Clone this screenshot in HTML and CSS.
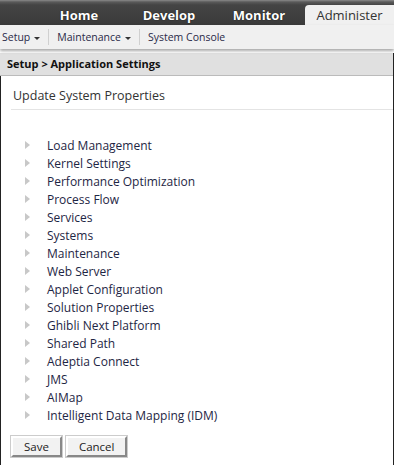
FILE: index.html
```html
<!DOCTYPE html>
<html lang="en">
  <head>
    <title>Application Settings</title>
    <link rel="stylesheet" href="styles.css">
  </head>
  <body>

  <div class="topbar">
    <a class="tab">Home</a>
    <a class="tab">Develop</a>
    <a class="tab">Monitor</a>
    <a class="tab active">Administer</a>
  </div>

  <div class="subnav">
    <span class="sub-item">Setup <span class="caret"></span></span>
    <span class="sep"></span>
    <span class="sub-item">Maintenance <span class="caret"></span></span>
    <span class="sep"></span>
    <span class="sub-item">System Console</span>
  </div>

  <div class="page">
    <div class="crumb">Setup &gt; Application Settings</div>
    <div class="panel">
      <div class="panel-title">Update System Properties</div>

      <ul class="tree">
        <li><span class="arrow"></span>Load Management</li>
        <li><span class="arrow"></span>Kernel Settings</li>
        <li><span class="arrow"></span>Performance Optimization</li>
        <li><span class="arrow"></span>Process Flow</li>
        <li><span class="arrow"></span>Services</li>
        <li><span class="arrow"></span>Systems</li>
        <li><span class="arrow"></span>Maintenance</li>
        <li><span class="arrow"></span>Web Server</li>
        <li><span class="arrow"></span>Applet Configuration</li>
        <li><span class="arrow"></span>Solution Properties</li>
        <li><span class="arrow"></span>Ghibli Next Platform</li>
        <li><span class="arrow"></span>Shared Path</li>
        <li><span class="arrow"></span>Adeptia Connect</li>
        <li><span class="arrow"></span>JMS</li>
        <li><span class="arrow"></span>AIMap</li>
        <li><span class="arrow"></span>Intelligent Data Mapping (IDM)</li>
      </ul>

      <div class="buttons">
        <button class="btn">Save</button>
        <button class="btn">Cancel</button>
      </div>
    </div>
  </div>

  </body>
</html>
```

FILE: styles.css
```css
body {
  margin: 0;
  width: 394px;
  height: 465px;
  overflow: hidden;
  font-family: "Open Sans", "DejaVu Sans", sans-serif;
  background-color: #fff;
}

.topbar {
  display: flex;
  justify-content: flex-end;
  align-items: flex-end;
  gap: 2px;
  height: 25px;
  background: linear-gradient(#8a8a8a 0, #5a5a5a 2px, #444 5px, #3a3a3a 25px);
}

.tab {
  width: 88px;
  height: 20px;
  line-height: 20px;
  text-align: center;
  font-size: 13px;
  font-weight: bold;
  color: #fff;
  text-shadow: 0 0 1px #000;
}

.tab.active {
  width: 89px;
  font-weight: normal;
  color: #333;
  text-shadow: none;
  background-color: #f0f0f0;
  border-top-left-radius: 4px;
}

.subnav {
  display: flex;
  align-items: center;
  height: 24px;
  padding-left: 2px;
  background-color: #f0f0f0;
  font-size: 10.5px;
  color: #2a2a48;
  box-shadow: 0 2px 3px rgba(0, 0, 0, 0.35);
  position: relative;
}

.sub-item {
  display: flex;
  align-items: center;
  gap: 4px;
}

.caret {
  width: 0;
  height: 0;
  border-left: 3px solid transparent;
  border-right: 3px solid transparent;
  border-top: 3px solid #333;
  margin-top: 2px;
}

.sep {
  width: 1px;
  height: 16px;
  background-color: #d0d0d0;
  margin: 0 8px 0 8px;
}

.page {
  margin-top: 4px;
  border-right: 1px solid #222;
}

.crumb {
  height: 22px;
  line-height: 22px;
  padding-left: 7px;
  background-color: #e0e0e0;
  border-bottom: 1px solid #bbb;
  font-size: 11px;
  font-weight: bold;
  color: #111;
}

.panel {
  height: 409px;
  border-left: 1px solid #222;
  border-bottom: 1px solid #222;
  padding-left: 10px;
}

.panel-title {
  padding: 11px 0 5px 2px;
  font-size: 12.5px;
  color: #333;
  border-bottom: 1px solid #e4e4e4;
}

.tree {
  list-style: none;
  margin: 26px 0 0 0;
  padding: 0 0 0 14px;
}

.tree li {
  display: flex;
  align-items: center;
  height: 18px;
  font-size: 12px;
  color: #1e2644;
}

.arrow {
  width: 0;
  height: 0;
  border-top: 4px solid transparent;
  border-bottom: 4px solid transparent;
  border-left: 5px solid #c8c8c8;
  margin-right: 17px;
}

.buttons {
  display: flex;
  gap: 4px;
  margin-top: 12px;
}

.btn {
  height: 21px;
  padding: 0 11px;
  font-family: "Open Sans", "DejaVu Sans", sans-serif;
  font-size: 11.5px;
  color: #222;
  background-color: #f2f2f2;
  border: 2px solid;
  border-color: #fff #888 #888 #fff;
  box-shadow: 0 0 0 1px #ccc;
}
```
